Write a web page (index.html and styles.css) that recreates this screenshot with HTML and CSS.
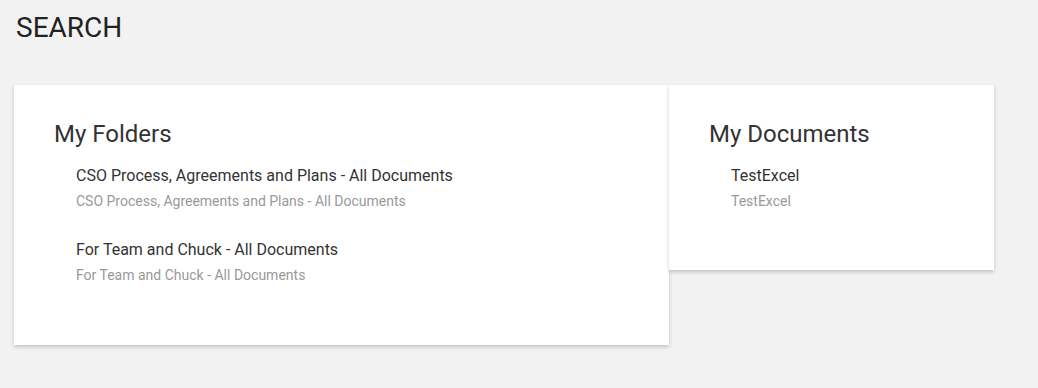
FILE: index.html
```html
<!DOCTYPE html>
<html>
<head>
<meta charset="utf-8">
<link rel="stylesheet" href="styles.css">
</head>
<body>
<h1 class="page-title">SEARCH</h1>
<div class="cards">
  <section class="card card-folders">
    <h2 class="card-title">My Folders</h2>
    <ul class="items">
      <li class="item">
        <div class="item-name">CSO Process, Agreements and Plans - All Documents</div>
        <div class="item-sub">CSO Process, Agreements and Plans - All Documents</div>
      </li>
      <li class="item">
        <div class="item-name">For Team and Chuck - All Documents</div>
        <div class="item-sub">For Team and Chuck - All Documents</div>
      </li>
    </ul>
  </section>
  <section class="card card-docs">
    <h2 class="card-title">My Documents</h2>
    <ul class="items">
      <li class="item">
        <div class="item-name">TestExcel</div>
        <div class="item-sub">TestExcel</div>
      </li>
    </ul>
  </section>
</div>
</body>
</html>
```

FILE: styles.css
```css
html, body {
  margin: 0;
  padding: 0;
  background: #f2f2f2;
  font-family: Roboto, "Liberation Sans", sans-serif;
}
body {
  min-height: 388px;
}
.page-title {
  margin: 0;
  padding: 11px 0 0 16px;
  font-size: 28px;
  font-weight: 400;
  color: #222;
  line-height: 34px;
}
.cards {
  display: flex;
  align-items: flex-start;
  margin: 40px 0 0 14px;
}
.card {
  background: #fff;
  box-shadow: 0 2px 4px rgba(0,0,0,0.2);
  padding: 35px 40px 0 40px;
  box-sizing: border-box;
}
.card-folders {
  width: 655px;
  height: 260px;
}
.card-docs {
  position: relative;
  width: 325px;
  height: 185px;
}
.card-title {
  margin: 0;
  font-size: 24px;
  font-weight: 400;
  color: #333;
  line-height: 28px;
}
.items {
  list-style: none;
  margin: 18px 0 0 0;
  padding: 0 0 0 22px;
}
.item {
  margin-bottom: 29px;
}
.item-name {
  font-size: 16px;
  color: #333;
  line-height: 20px;
}
.item-sub {
  font-size: 14px;
  color: #999;
  line-height: 20px;
  margin-top: 5px;
}
```
